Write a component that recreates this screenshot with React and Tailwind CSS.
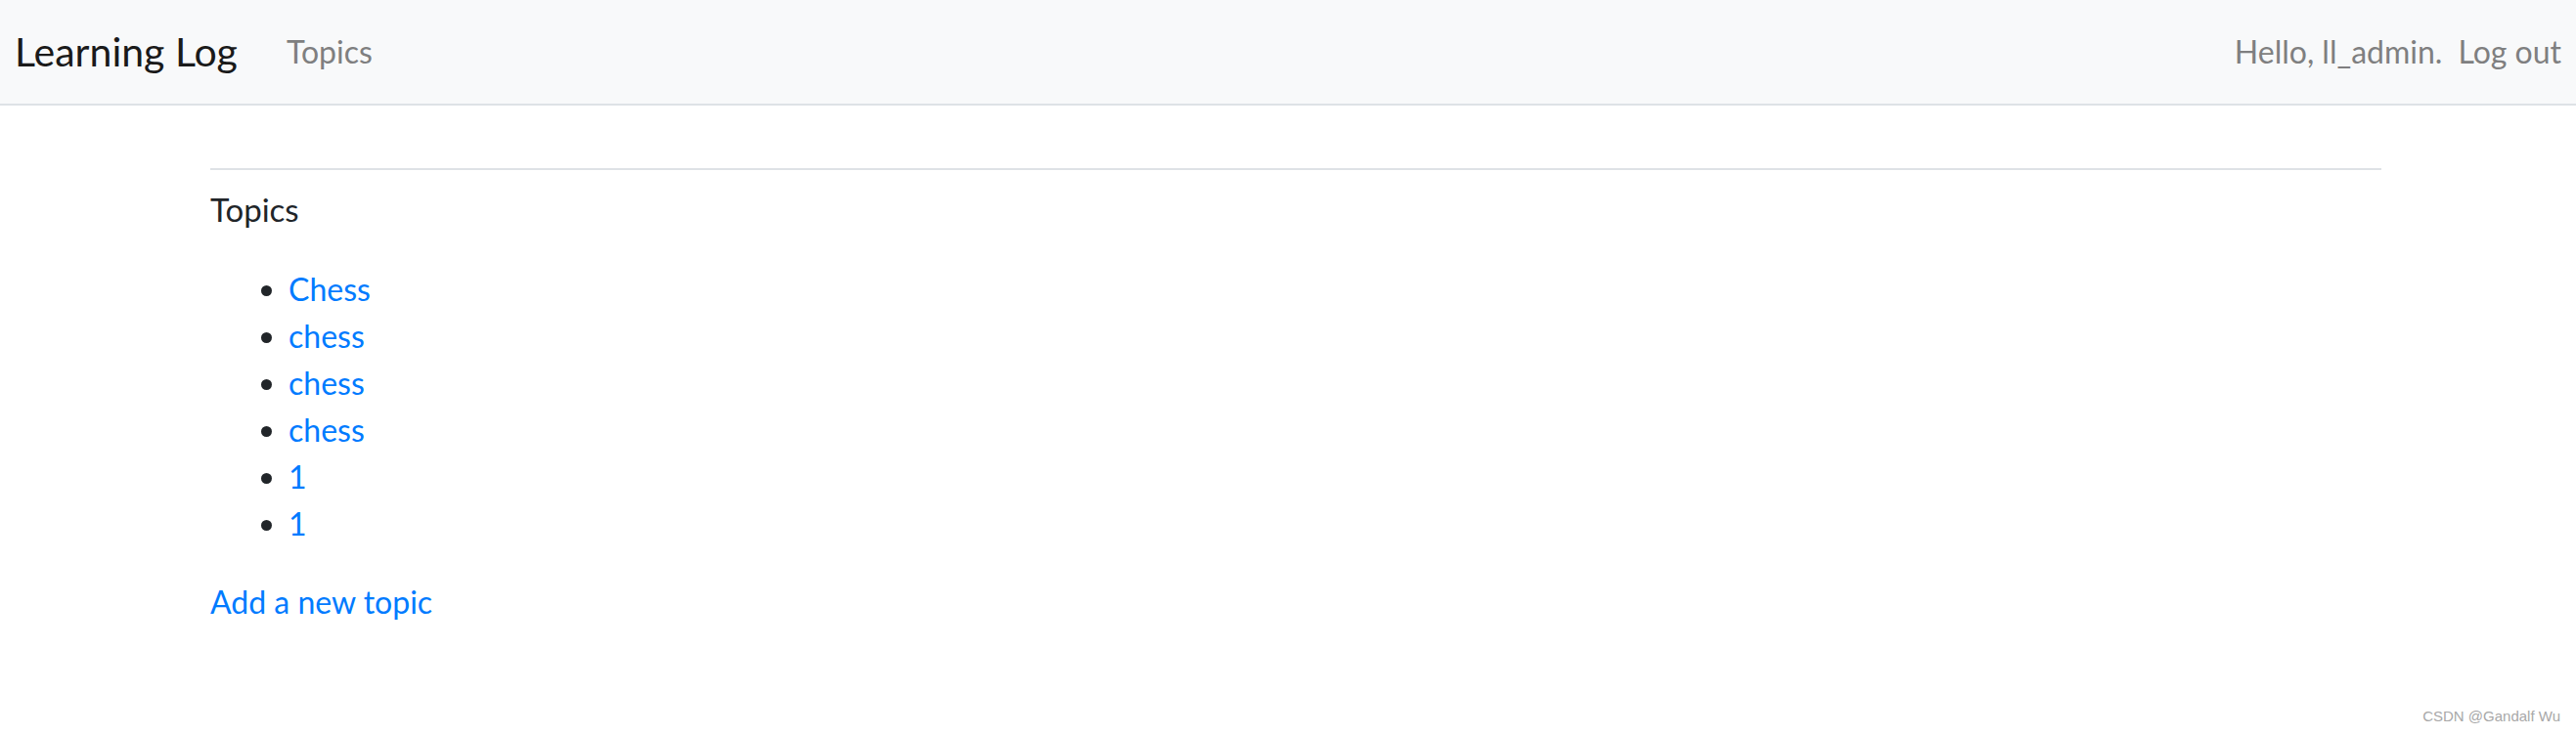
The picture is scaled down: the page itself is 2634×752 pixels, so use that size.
const TOPICS = ["Chess", "chess", "chess", "chess", "1", "1"];

export default function App() {
  return (
    <div
      className="relative h-[752px] w-full overflow-hidden bg-white text-[#212529]"
      style={{ fontFamily: "Lato, 'Open Sans', sans-serif" }}
    >
      {/* Navbar */}
      <nav className="flex h-[108px] items-center justify-between border-b-2 border-[#dee2e6] bg-[#f8f9fa] pl-[15px] pr-[15px]">
        <div className="flex items-center">
          <a className="text-[41px] leading-[60px] text-[#1a1a1a]">Learning Log</a>
          <a className="ml-[50px] text-[32px] leading-[48px] text-[#7f7f80]">Topics</a>
        </div>
        <div className="flex items-center text-[32px] leading-[48px] text-[#7f7f80]">
          <span>Hello, ll_admin.</span>
          <a className="ml-[16px]">Log out</a>
        </div>
      </nav>

      {/* Content */}
      <main className="ml-[215px] w-[2220px] pt-[64px]">
        <hr className="border-t-2 border-[#dee2e6]" />
        <p className="mt-[16px] text-[33px] leading-[48px]">Topics</p>
        <ul className="mt-[34px] list-disc pl-[80px] text-[32px] leading-[48px] marker:text-[#212529]">
          {TOPICS.map((t, i) => (
            <li key={i}>
              <a className="text-[#007bff]">{t}</a>
            </li>
          ))}
        </ul>
        <a className="mt-[32px] block text-[32px] leading-[48px] text-[#007bff]">
          Add a new topic
        </a>
      </main>

      {/* Watermark */}
      <div
        className="absolute bottom-[8px] right-[16px] text-[15px] text-[#a8a8a8]"
        style={{ fontFamily: "'Liberation Sans', Arial, sans-serif" }}
      >
        CSDN @Gandalf Wu
      </div>
    </div>
  );
}
